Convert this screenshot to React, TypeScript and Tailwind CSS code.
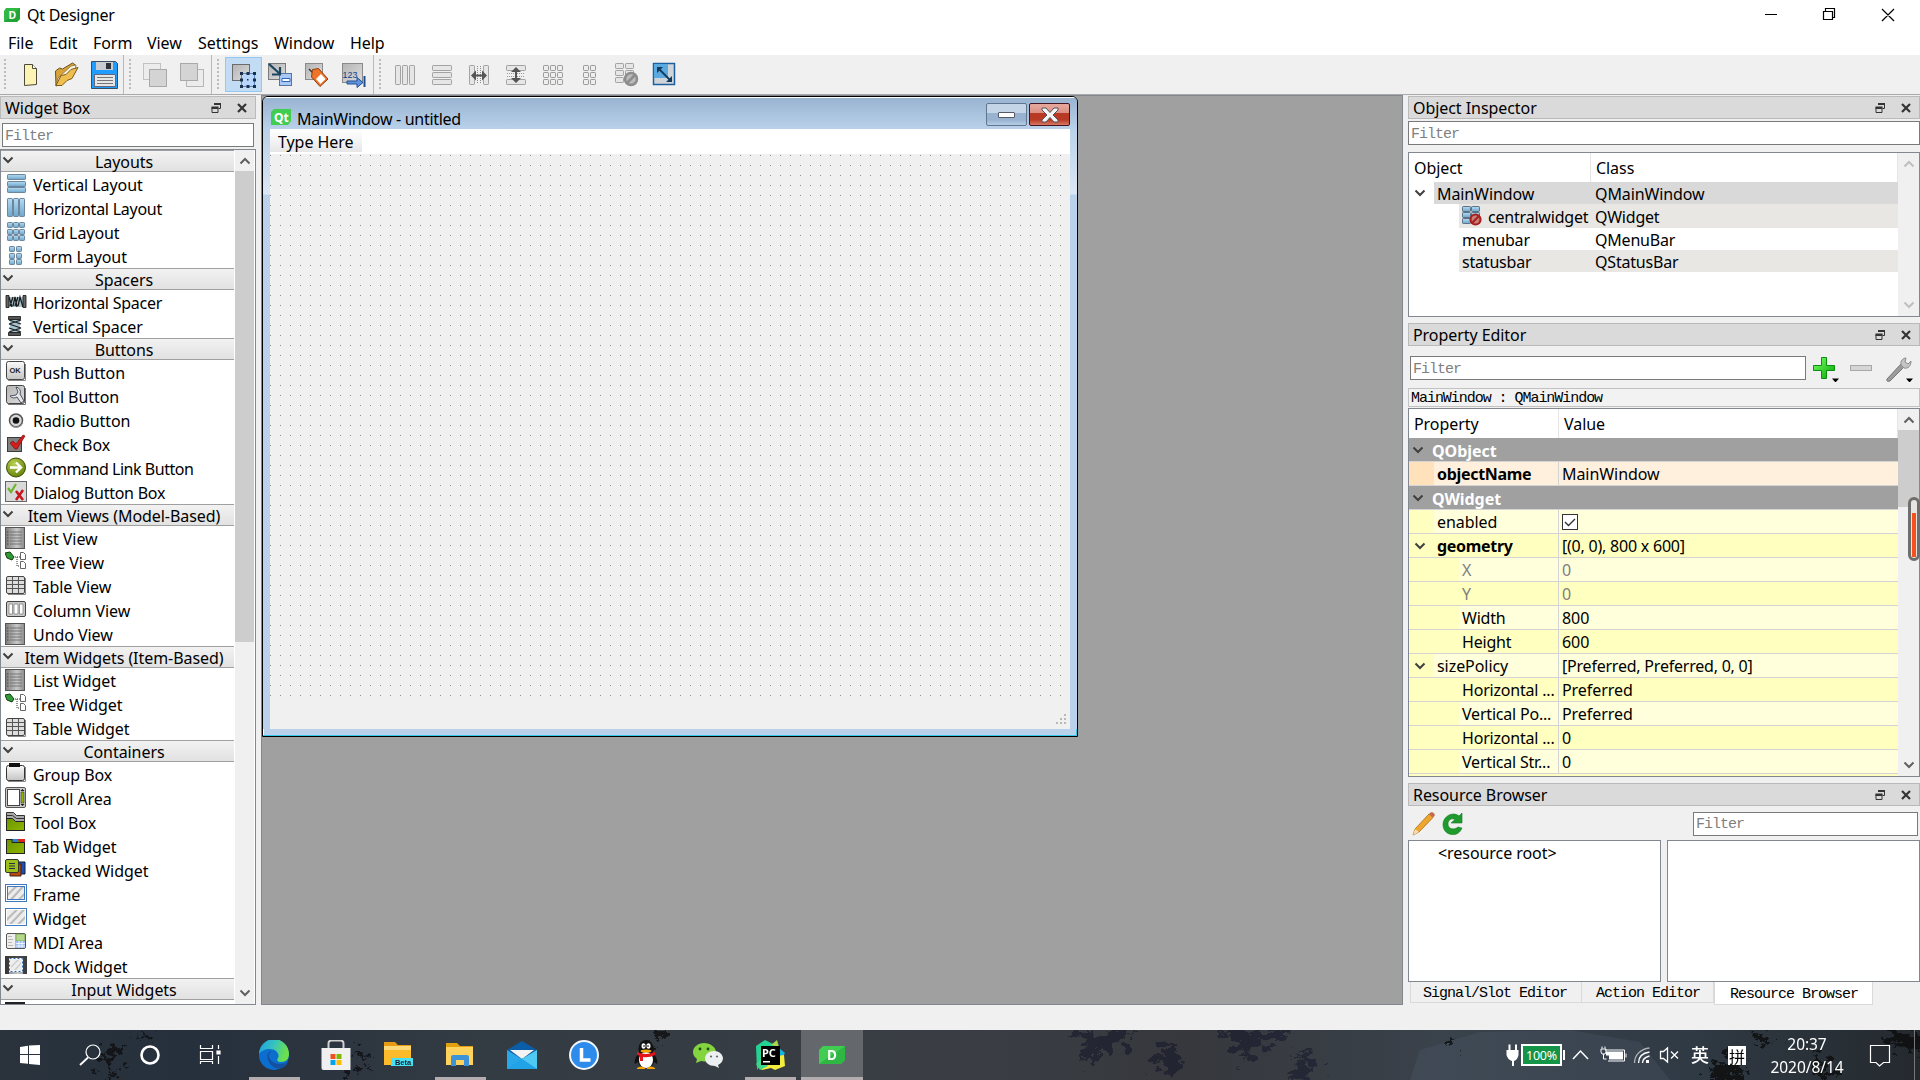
import type { ReactNode } from "react";
import { clsx } from "clsx";

type IconProps = { name: string };

const sections = [
  {
    title: "Layouts",
    items: [
      ["vbox", "Vertical Layout"],
      ["hbox", "Horizontal Layout"],
      ["grid", "Grid Layout"],
      ["form", "Form Layout"],
    ],
  },
  {
    title: "Spacers",
    items: [
      ["hspacer", "Horizontal Spacer"],
      ["vspacer", "Vertical Spacer"],
    ],
  },
  {
    title: "Buttons",
    items: [
      ["push", "Push Button"],
      ["tool", "Tool Button"],
      ["radio", "Radio Button"],
      ["check", "Check Box"],
      ["command", "Command Link Button"],
      ["dialog", "Dialog Button Box"],
    ],
  },
  {
    title: "Item Views (Model-Based)",
    items: [
      ["list", "List View"],
      ["tree", "Tree View"],
      ["table", "Table View"],
      ["column", "Column View"],
      ["list", "Undo View"],
    ],
  },
  {
    title: "Item Widgets (Item-Based)",
    items: [
      ["list", "List Widget"],
      ["tree", "Tree Widget"],
      ["table", "Table Widget"],
    ],
  },
  {
    title: "Containers",
    items: [
      ["group", "Group Box"],
      ["scroll", "Scroll Area"],
      ["toolbox", "Tool Box"],
      ["tab", "Tab Widget"],
      ["stacked", "Stacked Widget"],
      ["frame", "Frame"],
      ["widget", "Widget"],
      ["mdi", "MDI Area"],
      ["dock", "Dock Widget"],
    ],
  },
  { title: "Input Widgets", items: [] },
];

const properties = [
  { name: "QObject", kind: "group" },
  { name: "objectName", value: "MainWindow", kind: "peach", bold: true },
  { name: "QWidget", kind: "group" },
  { name: "enabled", value: "check", kind: "light" },
  { name: "geometry", value: "[(0, 0), 800 x 600]", kind: "dark", bold: true, open: true },
  { name: "X", value: "0", kind: "light", child: true, disabled: true },
  { name: "Y", value: "0", kind: "dark", child: true, disabled: true },
  { name: "Width", value: "800", kind: "light", child: true },
  { name: "Height", value: "600", kind: "dark", child: true },
  { name: "sizePolicy", value: "[Preferred, Preferred, 0, 0]", kind: "light", open: true },
  { name: "Horizontal ...", value: "Preferred", kind: "dark", child: true },
  { name: "Vertical Po...", value: "Preferred", kind: "light", child: true },
  { name: "Horizontal ...", value: "0", kind: "dark", child: true },
  { name: "Vertical Str...", value: "0", kind: "light", child: true },
];

function Defs() {
  return (
    <svg width="0" height="0" className="absolute">
      <defs>
        <linearGradient id="blue" x1="0" y1="0" x2="0" y2="1">
          <stop offset="0" stopColor="#b5dcf3" />
          <stop offset="1" stopColor="#6fa6cc" />
        </linearGradient>
        <linearGradient id="gray" x1="0" y1="0" x2="1" y2="1">
          <stop offset="0" stopColor="#b4b4b4" />
          <stop offset="1" stopColor="#dedede" />
        </linearGradient>
        <linearGradient id="light" x1="0" y1="0" x2="0" y2="1">
          <stop offset="0" stopColor="#fafafa" />
          <stop offset="1" stopColor="#c4c4c4" />
        </linearGradient>
        <linearGradient id="list" x1="0" y1="0" x2="1" y2="0">
          <stop offset="0" stopColor="#7c7c7c" />
          <stop offset="0.6" stopColor="#c8c8c8" />
          <stop offset="1" stopColor="#8a8a8a" />
        </linearGradient>
        <linearGradient id="olive" x1="0" y1="0" x2="1" y2="1">
          <stop offset="0" stopColor="#6c9400" />
          <stop offset="1" stopColor="#8db600" />
        </linearGradient>
        <radialGradient id="lime" cx="0.4" cy="0.3" r="0.8">
          <stop offset="0" stopColor="#b9d154" />
          <stop offset="1" stopColor="#5d7a00" />
        </radialGradient>
        <linearGradient id="plus" x1="0" y1="0" x2="1" y2="1">
          <stop offset="0" stopColor="#7dff6a" />
          <stop offset="1" stopColor="#00a800" />
        </linearGradient>
        <linearGradient id="edge" x1="0" y1="0" x2="1" y2="0.3">
          <stop offset="0" stopColor="#1b9de2" />
          <stop offset="0.5" stopColor="#35c1c4" />
          <stop offset="1" stopColor="#6be04c" />
        </linearGradient>
        <pattern id="dots" width="10" height="10" patternUnits="userSpaceOnUse">
          <rect x="0" y="1" width="1" height="1" fill="#8f8f8f" />
        </pattern>
        <filter id="rock" x="-5%" y="-20%" width="110%" height="140%">
          <feTurbulence type="fractalNoise" baseFrequency="0.09 0.12" numOctaves="4" seed="4" />
          <feDisplacementMap in="SourceGraphic" scale="42" xChannelSelector="R" yChannelSelector="G" />
        </filter>
      </defs>
    </svg>
  );
}

function Cells({ xs, ys, w, h, fill, stroke }: { xs: number[]; ys: number[]; w: number; h: number; fill: string; stroke: string }) {
  return (
    <>
      {ys.map((y) =>
        xs.map((x) => (
          <rect key={`${x}-${y}`} x={x + 0.5} y={y + 0.5} width={w - 1} height={h - 1} rx="0.7" fill={fill} stroke={stroke} />
        ))
      )}
    </>
  );
}

function WidgetIcon({ name }: IconProps) {
  const icons: Record<string, ReactNode> = {
    vbox: <Cells xs={[2]} ys={[1, 8, 14]} w={19} h={6} fill="url(#blue)" stroke="#6d869c" />,
    hbox: <Cells xs={[2, 8, 14]} ys={[1]} w={6} h={19} fill="url(#blue)" stroke="#6d869c" />,
    grid: <Cells xs={[2, 8, 14]} ys={[1, 8, 14]} w={6} h={6} fill="url(#blue)" stroke="#6d869c" />,
    form: <Cells xs={[4, 11]} ys={[1, 8, 14]} w={6} h={6} fill="url(#blue)" stroke="#6d869c" />,
    hspacer: (
      <>
        <path d="M4 6h14v10H4z" fill="#a5c3d0" />
        <path d="M4 6l3 10M8 15l2-9 2 10M13 15l2-9 3 10M5 15l3-9M10 15l3-9" stroke="#1c1c1c" strokeWidth="1.3" fill="none" />
        <path d="M1 4.500h3v12H1zM18 4.500h3v12h-3z" fill="#666" stroke="#111" strokeWidth="0.8" />
      </>
    ),
    vspacer: (
      <>
        <path d="M5 4h10v14H5z" fill="#a5c3d0" />
        <path d="M4 5l12 4M4 9l12 4M4 13l12 4M16 5L4 9M16 13L4 17" stroke="#1c1c1c" strokeWidth="1.300" fill="none" />
        <path d="M3.500 1.500h12v3h-12zM3.500 17.500h12v3h-12z" fill="#555" stroke="#111" strokeWidth="0.8" />
      </>
    ),
    push: (
      <>
        <rect x="1.5" y="0.5" width="18" height="18" rx="2" fill="url(#light)" stroke="#444" />
        <path d="M20.500 3v16.500H3" stroke="#888" fill="none" />
        <text x="4.500" y="12" fontSize="7.500" fontWeight="bold" fontFamily="Liberation Sans" fill="#222">OK</text>
      </>
    ),
    tool: (
      <>
        <rect x="1.500" y="0.500" width="18" height="18" rx="2" fill="url(#gray)" stroke="#444" />
        <path d="M20.500 3v16.500H3" stroke="#777" fill="none" />
        <path d="M11 2a5 5 0 0 1 4 7l4 7-3 2-4-6a5 5 0 0 1-7-1l6-1 2-3z" fill="#e4e8ee" stroke="#4c5158" />
      </>
    ),
    radio: (
      <>
        <circle cx="11" cy="11.500" r="6.500" fill="#d8d8d8" stroke="#555" strokeWidth="1.500" />
        <circle cx="11" cy="11.500" r="3.300" fill="#111" />
        <path d="M5 15a7.500 7.500 0 0 0 13-1" stroke="#999" fill="none" />
      </>
    ),
    check: (
      <>
        <rect x="2.500" y="4.500" width="14" height="14" fill="#808080" stroke="#3c3c3c" />
        <path d="M5 10l3-2 3 3 7-9 2 1-8 13h-2z" fill="#d81b1b" stroke="#7c0d0d" strokeWidth="0.700" />
      </>
    ),
    command: (
      <>
        <circle cx="11" cy="10.500" r="9.500" fill="url(#lime)" stroke="#3c4d00" />
        <path d="M5 10.500h10M11 5.500l5 5-5 5" fill="none" stroke="#fff" strokeWidth="2.400" />
      </>
    ),
    dialog: (
      <>
        <rect x="0.500" y="0.500" width="21" height="20" fill="#d9d9d9" stroke="#666" />
        <path d="M3 7l3 4 5-8" fill="none" stroke="#6cb52d" strokeWidth="2.200" />
        <path d="M11 10l7 9M18 9l-7 10" fill="none" stroke="#c4161c" strokeWidth="2.500" />
      </>
    ),
    list: (
      <>
        <rect x="0.500" y="0.500" width="19" height="21" fill="url(#list)" stroke="#555" />
        <path d="M5 5h12M5 8h12M5 11h12M5 14h12M5 17h12" stroke="#666" strokeWidth="0.800" />
        <path d="M2 5h1.500M2 8h1.500M2 11h1.500M2 14h1.500M2 17h1.500" stroke="#333" strokeWidth="0.800" />
      </>
    ),
    tree: (
      <>
        <path d="M0 2l5-1 4 5-2 3-5-2z" fill="#2f9a35" stroke="#123c14" />
        <path d="M10 6h5M12 6v9h3" stroke="#333" strokeDasharray="1 1" fill="none" />
        <path d="M15.500 1.500h3l2 2v5h-5zM15.500 10.500h3l2 2v5h-5z" fill="#fff" stroke="#666" />
      </>
    ),
    table: (
      <>
        <rect x="1.500" y="1.500" width="18" height="17" rx="1.500" fill="#dedede" stroke="#444" />
        <path d="M2 5.500h17M2 9.500h17M2 13.500h17M7.500 2v16M13.500 2v16" stroke="#555" />
        <path d="M20.500 3v16.500H3" stroke="#888" fill="none" />
      </>
    ),
    column: (
      <>
        <rect x="1.500" y="2.500" width="19" height="15" rx="1.500" fill="#c9c9c9" stroke="#444" />
        <path d="M4 5h3.500v10H4zM9 5h4v10H9zM14.500 5H18v10h-3.500z" fill="#fff" stroke="#777" strokeWidth="0.700" />
      </>
    ),
    group: (
      <>
        <rect x="1.500" y="2.500" width="18" height="15" rx="2" fill="url(#light)" stroke="#333" />
        <path d="M20.500 4v14.500H3" stroke="#888" fill="none" />
        <rect x="4" y="0" width="11" height="4" fill="#111" />
      </>
    ),
    scroll: (
      <>
        <rect x="0.500" y="0.500" width="20" height="20" rx="1.500" fill="#ccc" stroke="#555" />
        <rect x="2.500" y="2.500" width="12" height="16" fill="#fff" stroke="#444" />
        <path d="M16 5h3v11h-3z" fill="#8db600" stroke="#333" strokeWidth="0.600" />
        <path d="M15.500 4l2-2 2 2zM15.500 17l2 2 2-2z" fill="#111" />
      </>
    ),
    toolbox: (
      <>
        <path d="M1.500 1.500h7l3 3h8v15h-18z" fill="#aaa" stroke="#333" />
        <path d="M1.500 4.500h6l4 3h8" fill="none" stroke="#333" />
        <path d="M1.500 7.500h6l3 3h9v9h-18z" fill="url(#olive)" stroke="#222" />
      </>
    ),
    tab: (
      <>
        <rect x="1.500" y="4.500" width="18" height="14" fill="url(#olive)" stroke="#222" />
        <path d="M7 4h6v3H8z" fill="#2c7ed6" />
        <path d="M13 4h7v3h-6z" fill="#d22" />
        <path d="M7 4v3.500h13" fill="none" stroke="#222" />
      </>
    ),
    stacked: (
      <>
        <path d="M12 3h8v12h-8z" fill="#1c4fb5" stroke="#123" />
        <path d="M5 5h11v12H5z" fill="#b5480f" stroke="#421" />
        <rect x="0.500" y="0.500" width="13" height="13" rx="1.500" fill="#9dbf1b" stroke="#333" />
        <path d="M4 4.500h6M4 7h6M4 9.500h6" stroke="#234" />
      </>
    ),
    frame: (
      <>
        <rect x="0.500" y="1.500" width="21" height="17" fill="#fff" stroke="#3f79c0" />
        <rect x="2.500" y="3.500" width="17" height="13" fill="#ededed" stroke="#3f79c0" />
        <path d="M3 10l6-6h3l-9 9zM5 16L16 4h3L8 16zM13 16l6-6v3l-3 3z" fill="#bcbcbc" />
      </>
    ),
    widget: (
      <>
        <rect x="0.500" y="1.500" width="21" height="17" fill="#fff" stroke="#3f79c0" />
        <path d="M2 3h18v14H2z" fill="#ededed" />
        <path d="M2 11l8-8h3L2 14zM4 17L17 3h3L7 17zM12 17l8-8v3l-5 5z" fill="#bcbcbc" />
      </>
    ),
    mdi: (
      <>
        <rect x="1.500" y="2.500" width="19" height="15" rx="1.500" fill="#eee" stroke="#555" />
        <path d="M11 3h9v7h-9z" fill="#b3d789" stroke="#668844" strokeWidth="0.600" />
        <path d="M11 10h9v7h-9z" fill="#9bbcf0" />
        <path d="M11 12.500h9M11 15h9M14 10v7M17 10v7" stroke="#fff" strokeWidth="0.800" />
        <path d="M3 5.500h4M3 8.500h5M3 11.500h4M3 14.500h5M10.500 3v14" stroke="#aaa" strokeWidth="0.800" />
      </>
    ),
    dock: (
      <>
        <path d="M0 1h22v18H0z" fill="url(#list)" />
        <path d="M0 1h22v3H0zM18 1h4v18h-4zM0 1h4v18H0z" fill="#222" opacity="0.750" />
        <rect x="4.500" y="3.500" width="13" height="13" fill="#eee" stroke="#fff" />
        <rect x="4.500" y="3.500" width="13" height="13" fill="none" stroke="#2b6ab8" strokeDasharray="2 2" />
        <path d="M6 11l6-6h2l-8 8zM9 15l7-8v2l-5 6z" fill="#ccc" />
      </>
    ),
  };
  return (
    <svg width="22" height="22" viewBox="0 0 22 22" className="shrink-0">
      {icons[name]}
    </svg>
  );
}

function ToolIcon({ name }: IconProps) {
  const sq = "url(#gray)";
  const icons: Record<string, ReactNode> = {
    new: (
      <>
        <path d="M12.500 7.500h8l4 4v16l-12 1z" fill="#fdf3b4" stroke="#4d4a3a" />
        <path d="M20.500 7.500v4h4" fill="#fff" stroke="#4d4a3a" />
      </>
    ),
    open: (
      <>
        <path d="M6.500 14l4-3 3 1 10-6 3 2v6L12 27l-5 2z" fill="#d9a33c" stroke="#6e5118" />
        <path d="M9 21l13-12 5-1-1 8-12 9-7 3z" fill="#f5f0e4" stroke="#8a6d2c" strokeWidth="0.800" />
        <path d="M7 28.500l5-10 5-1 5-5 7-2-6 11-5 2-5 5z" fill="#eebf4e" stroke="#7e5c17" />
      </>
    ),
    save: (
      <>
        <path d="M5.500 4.500h24l2 2v25h-26z" fill="#1f9dff" stroke="#3a4f66" />
        <path d="M10 5h17v8H10z" fill="#c9ccd0" />
        <path d="M20 6h5v6h-5z" fill="#2f3338" />
        <path d="M8.500 17.500h21v12h-21z" fill="#e6e6e6" stroke="#667" />
        <path d="M11 20.500h16M11 23.500h16M11 26.500h16" stroke="#777" />
      </>
    ),
    lower: (
      <>
        <rect x="6.500" y="6.500" width="17" height="16" fill="#ececec" stroke="#c2c2c2" />
        <rect x="12.500" y="12.500" width="17" height="17" fill="#d4d4d4" stroke="#a9a9a9" />
      </>
    ),
    raise: (
      <>
        <rect x="12.500" y="12.500" width="17" height="17" fill="#ececec" stroke="#b5b5b5" />
        <rect x="6.500" y="6.500" width="17" height="17" fill="#d4d4d4" stroke="#a9a9a9" />
      </>
    ),
    widgets: (
      <>
        <rect x="7.500" y="7.500" width="17" height="16" fill={sq} stroke="#6b6b6b" />
        <rect x="16.500" y="16.500" width="13" height="13" fill="#b8d6fb" stroke="#5b86c4" />
        <path d="M15 15h3v3h-3zM21.500 15h3v3h-3zM28 15h3v3h-3zM15 21.500h3v3h-3zM28 21.500h3v3h-3zM15 28h3v3h-3zM21.500 28h3v3h-3zM28 28h3v3h-3zM22 22h1.500v1.500H22z" fill="#1b2e4a" />
      </>
    ),
    signals: (
      <>
        <rect x="6.500" y="6.500" width="17" height="16" fill={sq} stroke="#7a7a7a" />
        <rect x="17.500" y="16.500" width="12" height="12" fill="#a8c8f6" stroke="#56749c" />
        <path d="M20 21.500h8v3h-8z" fill="#fff" stroke="#2d67bb" />
        <path d="M7 7l11 10M18 10v7.500h-8" fill="none" stroke="#1c4660" strokeWidth="2.200" />
      </>
    ),
    buddies: (
      <>
        <rect x="6.500" y="6.500" width="17" height="16" fill={sq} stroke="#8a8a8a" />
        <path d="M10 12l4 4" stroke="#333" strokeWidth="1.500" />
        <path d="M13.500 12.500l6-1L29 22l-8 7.500L12.500 20z" fill="#ef7428" stroke="#8f3d0e" />
        <path d="M17 22l5-5 4.500 5-5 5z" fill="#fff" />
      </>
    ),
    taborder: (
      <>
        <rect x="6.500" y="6.500" width="20" height="19" fill={sq} stroke="#8a8a8a" />
        <text x="6.500" y="21" fontSize="9" fontFamily="Liberation Sans" fill="#123e8c">123</text>
        <path d="M11 24h10v-3.500l6 5-6 5V27H11z" fill="#5d94dd" stroke="#204f92" />
        <path d="M28.500 19v11" stroke="#204f92" strokeWidth="2" />
      </>
    ),
    hlayout: <Cells xs={[8, 15, 22]} ys={[8]} w={6} h={20} fill="#e6e6e6" stroke="#a3a3a3" />,
    vlayout: <Cells xs={[8]} ys={[8, 15, 22]} w={20} h={6} fill="#e6e6e6" stroke="#a3a3a3" />,
    hsplit: (
      <>
        <Cells xs={[8, 22]} ys={[8]} w={6} h={20} fill="#e6e6e6" stroke="#a3a3a3" />
        <path d="M16.500 9v18M19.500 9v18" stroke="#888" strokeDasharray="1 1" />
        <path d="M10 18.500l5-5v4h6v-4l5 5-5 5v-4h-6v4z" fill="#555" />
      </>
    ),
    vsplit: (
      <>
        <Cells xs={[8]} ys={[8, 22]} w={20} h={6} fill="#e6e6e6" stroke="#a3a3a3" />
        <path d="M9 16.500h18M9 19.500h18" stroke="#999" strokeDasharray="1 1" />
        <path d="M18 10l5 5h-4v6h4l-5 5-5-5h4v-6h-4z" fill="#555" />
      </>
    ),
    gridlayout: <Cells xs={[8, 15, 22]} ys={[8, 15, 22]} w={6} h={6} fill="#eee" stroke="#9a9a9a" />,
    formlayout: <Cells xs={[11, 18]} ys={[8, 15, 22]} w={6} h={6} fill="#eee" stroke="#9a9a9a" />,
    breaklayout: (
      <>
        <Cells xs={[6, 16]} ys={[6, 13, 20]} w={9} h={6} fill="#e6e6e6" stroke="#a3a3a3" />
        <circle cx="22" cy="22" r="6" fill="#bbb" stroke="#8d8d8d" strokeWidth="2.500" />
        <path d="M18 26l8-8" stroke="#8d8d8d" strokeWidth="2.500" />
      </>
    ),
    adjust: (
      <>
        <rect x="7.500" y="6.500" width="21" height="21" fill="#cfd4d8" stroke="#1d5f9e" strokeWidth="1.500" />
        <path d="M8 7h14v14H8z" fill="#5aa9e0" />
        <path d="M12 11l13 13" stroke="#123a5c" strokeWidth="1.800" />
        <path d="M11 10h6l-6 6zM26 25h-6l6-6z" fill="#123a5c" />
      </>
    ),
  };
  return (
    <svg width="37" height="35" viewBox="0 0 37 35">
      {icons[name]}
    </svg>
  );
}

function Chevron({ up, className = "text-[#404040]" }: { up?: boolean; className?: string }) {
  return (
    <svg width="12" height="8" viewBox="0 0 12 8" className={clsx("shrink-0", className)}>
      <path d={up ? "M1.500 6.500L6 2l4.500 4.500" : "M1.500 1.500L6 6l4.500-4.500"} fill="none" stroke="currentColor" strokeWidth="2" />
    </svg>
  );
}

function DockTitle({ title }: { title: string }) {
  return (
    <div className="flex h-[23px] shrink-0 items-center border border-[#bababa] bg-[#dadada] pl-1 pr-[8px]">
      <span className="flex-1 pt-px">{title}</span>
      <svg width="11" height="12" viewBox="0 0 11 12" className="mr-[15px]">
        <path d="M3.500 3V1.500h6v5H8" fill="none" stroke="#333" />
        <path d="M3 1h7v2H3z" fill="#333" />
        <path d="M1 5.500h6v5H1z" fill="none" stroke="#333" />
        <path d="M0.500 4.500h7v2.500h-7z" fill="#333" />
      </svg>
      <svg width="10" height="10" viewBox="0 0 10 10">
        <path d="M1 1l8 8M9 1L1 9" stroke="#333" strokeWidth="2.200" />
      </svg>
    </div>
  );
}

function Filter({ className }: { className: string }) {
  return (
    <div className={clsx("flex h-6 items-center border border-[#7a7a7a] bg-white pl-[2px] pt-[3px] font-['Liberation_Mono',monospace] text-[15px] tracking-[-1px] text-[#7f7f7f]", className)}>
      Filter
    </div>
  );
}

function ToolGroup({ icons, active, last }: { icons: string[]; active?: string; last?: boolean }) {
  return (
    <div className={clsx("mr-px flex h-[39px] items-center", !last && "border-r border-[#b9b9b9]")}>
      <div className="ml-1 mr-[6px] h-[31px] w-[2px] bg-[repeating-linear-gradient(to_bottom,#bcbcbc_0_2px,transparent_2px_4px)]" />
      {icons.map((name) => (
        <div key={name} className={clsx("h-[35px] w-[37px]", name === active && "bg-[#c2dcf3] outline outline-1 -outline-offset-1 outline-[#90c8f6]")}>
          <ToolIcon name={name} />
        </div>
      ))}
    </div>
  );
}

function WidgetBox() {
  return (
    <div className="flex h-[910px] w-[256px] flex-col pt-px">
      <DockTitle title="Widget Box" />
      <Filter className="ml-[2px] mt-1 w-[252px]" />
      <div className="mt-[2px] flex h-[856px] border border-[#828790] bg-white">
        <div className="h-full w-[233px] overflow-hidden">
          {sections.map((section) => (
            <div key={section.title}>
              <div className="flex h-[22px] items-center border-y border-[#a0a0a0] bg-linear-to-b from-[#f2f2f2] to-[#e2e2e2] pl-px">
                <Chevron className="mb-[3px] text-[#404040]" />
                <span className="flex-1 pt-[2px] text-center">{section.title}</span>
              </div>
              {section.items.map(([icon, label]) => (
                <div key={label} className="flex h-6 items-center gap-[6px] pl-1">
                  <WidgetIcon name={icon} />
                  <span className={clsx("pt-[2px]", label.length > 17 ? "tracking-[-0.45px]" : label.length > 15 && "tracking-[-0.25px]")}>{label}</span>
                </div>
              ))}
            </div>
          ))}
          <div className="ml-1 mt-[2px] h-4 w-5 bg-[#222]" />
        </div>
        <div className="ml-px flex w-[19px] flex-col items-center bg-[#f0f0f0]">
          <div className="flex h-[21px] items-center">
            <Chevron up className="text-[#606060]" />
          </div>
          <div className="h-[471px] w-full bg-[#cdcdcd]" />
          <div className="flex-1" />
          <div className="flex h-[22px] items-center">
            <Chevron className="text-[#606060]" />
          </div>
        </div>
      </div>
    </div>
  );
}

function FormWindow() {
  return (
    <div className="flex h-[641px] w-[816px] flex-col overflow-hidden rounded-t-[6px] border border-black bg-[#b9d1ea] shadow-[inset_-1px_-1px_0_#35c9ee,inset_1px_1px_0_#fff]">
      <div className="flex h-8 shrink-0 border-t border-white bg-linear-to-b from-[#99b4d1] to-[#b9d1ea] pl-[8px]">
        <svg width="20" height="16" viewBox="0 0 20 16" className="mt-[11px]">
          <path d="M3 0h17v12l-3 4H0V3z" fill="#41cd52" />
          <text x="3" y="12.500" fontSize="12" fontWeight="bold" fontFamily="Noto Sans" fill="#fff">Qt</text>
        </svg>
        <span className="ml-[6px] mt-[11px] flex-1 tracking-[-0.3px]">MainWindow - untitled</span>
        <div className="mt-[5px] flex h-[23px] w-[41px] items-center justify-center rounded-[2px] border border-[#5f7590] bg-[linear-gradient(#c4d5e8_0_45%,#98b3d0_45%_75%,#b5cce4)]">
          <div className="h-[6px] w-[17px] rounded-[1px] border border-[#555a66] bg-white" />
        </div>
        <div className="ml-[2px] mr-[7px] mt-[5px] flex h-[23px] w-[41px] items-center justify-center rounded-[2px] border border-[#431422] bg-[linear-gradient(#e5a598_0_10%,#dc8f83_42%,#b83a24_43%_75%,#d97a63)]">
          <svg width="18" height="16" viewBox="0 0 18 16">
            <path d="M1 1h4l4 4.500L13 1h4v2l-5 5 5 5v2h-4l-4-4.500L5 15H1v-2l5-5-5-5z" fill="#f5f5f5" stroke="#54525e" />
          </svg>
        </div>
      </div>
      <div className="flex h-[600px] bg-[linear-gradient(#b9d1ea,#dbe7f4_65px,#b9d1ea_66px)] px-[7px]">
        <div className="flex h-[600px] w-[800px] flex-col bg-[#f0f0f0]">
          <div className="flex h-[25px] bg-white">
            <div className="flex h-[23px] w-[92px] items-center bg-linear-to-b from-white via-[#f4f4f4] to-[#e6e6e6] pl-[8px] pt-[2px]">Type Here</div>
          </div>
          <svg width="800" height="550">
            <rect width="800" height="550" fill="url(#dots)" />
          </svg>
          <div className="flex flex-1 items-end justify-end p-[3px]">
            <svg width="12" height="12" viewBox="0 0 12 12" fill="#b8b8b8">
              <path d="M9 0h2v2H9zM5 4h2v2H5zM9 4h2v2H9zM1 8h2v2H1zM5 8h2v2H5zM9 8h2v2H9z" />
            </svg>
          </div>
        </div>
      </div>
    </div>
  );
}

function ObjectInspector() {
  const rows = [
    ["centralwidget", "QWidget"],
    ["menubar", "QMenuBar"],
    ["statusbar", "QStatusBar"],
  ];
  return (
    <div className="flex h-[227px] flex-col pt-px">
      <DockTitle title="Object Inspector" />
      <Filter className="mt-[2px]" />
      <div className="mt-[7px] flex h-[165px] border border-[#828790] bg-white">
        <div className="w-[489px]">
          <div className="flex h-[29px] items-center border-r border-[#e5e5e5]">
            <div className="flex h-full w-[182px] items-center border-r border-[#e5e5e5] pl-[5px] pt-px">Object</div>
            <div className="pl-[5px] pt-px">Class</div>
          </div>
          <div className="flex h-[22px] items-center pl-[5px]">
            <Chevron />
            <div className="ml-[8px] flex h-full flex-1 items-center bg-[#d9d9d9] pl-[3px] pt-px tracking-[-0.1px]">
              <span className="w-[158px]">MainWindow</span>QMainWindow
            </div>
          </div>
          {rows.map(([name, cls], i) => (
            <div key={name} className={clsx("ml-[50px] flex items-center pl-[3px] tracking-[-0.2px]", i === 0 ? "h-6" : "h-[22px]", i !== 1 && "bg-[#e9e7e3]")}>
              <div className="flex w-[133px] items-center">
                {i === 0 && (
                  <svg width="20" height="20" viewBox="0 0 20 20" className="mr-[6px] shrink-0">
                    <Cells xs={[0, 9]} ys={[0, 6, 12]} w={9} h={6} fill="url(#blue)" stroke="#5b7389" />
                    <circle cx="13.500" cy="13.500" r="5" fill="#c98078" stroke="#a81f1f" strokeWidth="2.200" />
                    <path d="M10 17l7-7" stroke="#a81f1f" strokeWidth="2.200" />
                  </svg>
                )}
                <span className="pt-px">{name}</span>
              </div>
              <span className="pt-px">{cls}</span>
            </div>
          ))}
        </div>
        <div className="flex flex-1 flex-col items-center justify-between bg-[#f0f0f0] py-[7px]">
          <Chevron up className="text-[#bfbfbf]" />
          <Chevron className="text-[#bfbfbf]" />
        </div>
      </div>
    </div>
  );
}

const tones: Record<string, string> = {
  group: "bg-[#a0a0a0] text-white font-bold",
  peach: "bg-[#fff0de]",
  light: "bg-[#ffffdc]",
  dark: "bg-[#ffffbf]",
};

function PropertyEditor() {
  return (
    <div className="flex h-[460px] flex-col">
      <DockTitle title="Property Editor" />
      <div className="flex h-[42px] items-center pl-[2px] pt-[2px]">
        <Filter className="w-[396px]" />
        <svg width="114" height="28" viewBox="-2 0 114 28">
          <path d="M13.500 3.500h5v8h8v5h-8v8h-5v-8h-8v-5h8z" fill="url(#plus)" stroke="#0a8f12" />
          <path d="M24 24.500h7l-3.500 4zM98 24.500h7l-3.500 4z" fill="#000" />
          <rect x="42.500" y="11.500" width="21" height="5" fill="#d5d5d5" stroke="#a8a8a8" />
          <path d="M79 25l14-15 3 3-14 14c-2 1-4 0-3-2z" fill="#9b9b9b" stroke="#777" />
          <path d="M93 11c-1-4 2-7 5-7l-1 4 3 2 3-3c0 5-3 8-7 7z" fill="#c4c4c4" stroke="#8b8b8b" />
        </svg>
      </div>
      <div className="flex h-[19px] items-center border border-[#c2c2c2] bg-[#f2f2f2] pl-[2px] pt-[3px] font-['Liberation_Mono',monospace] text-[15px] tracking-[-1.04px]">
        MainWindow : QMainWindow
      </div>
      <div className="mt-px flex h-[369px] border border-[#828790] bg-white">
        <div className="h-full w-[489px] overflow-hidden">
          <div className="flex h-[29px] items-center border-r border-[#e5e5e5]">
            <div className="flex h-full w-[150px] items-center border-r border-[#e5e5e5] pl-[5px] pt-px">Property</div>
            <div className="pl-[5px] pt-px">Value</div>
          </div>
          {properties.map((prop, i) =>
            prop.kind === "group" ? (
              <div key={i} className={clsx("flex h-6 items-center border-b border-[#d4d4d4] pl-[3px]", tones.group)}>
                <Chevron />
                <span className="pl-[8px] pt-[2px]">{prop.name}</span>
              </div>
            ) : (
              <div key={i} className={clsx("flex h-6 border-b border-[#d4d4d4]", tones[prop.kind], prop.disabled && "text-[#808080]")}>
                <div className={clsx("flex h-full items-center", prop.child ? "w-[50px]" : "w-[25px]", prop.kind === "peach" ? "bg-[#ffe2bb]" : "bg-[#ffffbf]")}>
                  {prop.open && (
                    <div className="pl-[5px]">
                      <Chevron />
                    </div>
                  )}
                </div>
                <div className={clsx("flex items-center border-r border-[#d4d4d4] pl-[3px] pt-px", prop.child ? "w-[100px] tracking-[-0.2px]" : "w-[125px]", prop.bold && "font-bold tracking-[-0.3px]")}>{prop.name}</div>
                <div className="flex items-center pl-[3px] pt-px">
                  {prop.value === "check" ? (
                    <svg width="16" height="16" viewBox="0 0 16 16">
                      <rect x="0.500" y="0.500" width="15" height="15" fill="#fff" stroke="#333" />
                      <path d="M3 8l3.500 3.500L13 5" fill="none" stroke="#333" strokeWidth="1.400" />
                    </svg>
                  ) : (
                    <span className={prop.value && prop.value.length > 12 ? "tracking-[-0.22px]" : ""}>{prop.value}</span>
                  )}
                </div>
              </div>
            )
          )}
          <div className="h-6 bg-[#ffffbf]" />
        </div>
        <div className="flex flex-1 flex-col items-center bg-[#f0f0f0]">
          <div className="flex h-[21px] items-center">
            <Chevron up className="text-[#606060]" />
          </div>
          <div className="relative h-[77px] w-full bg-[#cdcdcd]">
            {/* floating volume gauge */}
            <div className="absolute left-[10px] top-[67px] h-[64px] w-[12px] rounded-full border-[3px] border-[#6e6e6e] bg-[#e8e4e2] px-[1px] pb-px pt-[13px]">
              <div className="h-full w-full bg-[#f4511e]" />
            </div>
          </div>
          <div className="flex-1" />
          <div className="flex h-[22px] items-center">
            <Chevron className="text-[#606060]" />
          </div>
        </div>
      </div>
    </div>
  );
}

function ResourceBrowser() {
  return (
    <div className="flex flex-col">
      <DockTitle title="Resource Browser" />
      <div className="flex h-[34px] items-center justify-between pr-[2px] pt-px">
        <svg width="60" height="28" viewBox="0 0 60 28">
          <path d="M5 25l2-6L21 4l4 3.500L11 22z" fill="#f0a52c" stroke="#a5701a" strokeWidth="0.800" />
          <path d="M21 4l1.500-1.500c2-1 5 1 4 3.500L25 7.500z" fill="#c8694f" />
          <path d="M5 25l2-6 4 3z" fill="#f4dcb0" />
          <path d="M54 3v10H43l4-3.500c-4-2-7 1-7 4.500 0 5 6 6.500 10 3l4 1c-2 5-6 7-10 6.500-6-.5-9-5-9-10C35 6 45 1 51 6z" fill="#1f9a2c" stroke="#147a1e" strokeWidth="0.600" />
        </svg>
        <Filter className="w-[225px]" />
      </div>
      <div className="flex gap-[6px]">
        <div className="h-[142px] w-[253px] border border-[#828790] bg-white pl-[29px] pt-[2px]">&lt;resource root&gt;</div>
        <div className="h-[142px] flex-1 border border-[#828790] bg-white" />
      </div>
      <div className="flex pl-[2px] font-['Liberation_Mono',monospace] text-[15px] tracking-[-1px]">
        <div className="flex h-[21px] w-[172px] items-center border border-t-0 border-[#d9d9d9] pl-3 pt-[3px]">Signal/Slot Editor</div>
        <div className="flex h-[21px] w-[132px] items-center border border-l-0 border-t-0 border-[#d9d9d9] pl-[14px] pt-[3px]">Action Editor</div>
        <div className="flex h-[23px] w-[159px] items-center border border-t-0 border-[#d9d9d9] bg-white pl-[15px] pt-[3px]">Resource Browser</div>
      </div>
    </div>
  );
}

function TaskIcon({ name }: IconProps) {
  const icons: Record<string, ReactNode> = {
    edge: (
      <>
        <circle cx="15" cy="15" r="15" fill="#0c6fd0" />
        <path d="M0 14A15 15 0 0 1 30 14c0 5-3 8-8 8-3 0-5-2-3-4 2-4-2-9-8-9-5 0-9 2-11 5z" fill="url(#edge)" />
        <path d="M10 16c0-3 2-5 5-5-7-1-7 5-6 9 2 6 8 10 14 8 3-1 5-3 6-6-7 4-18 2-19-6z" fill="#1451a0" />
      </>
    ),
    store: (
      <>
        <path d="M7.500 9V3.500q0-3 3-3h9q3 0 3 3V9" fill="none" stroke="#cfcfcf" strokeWidth="2" />
        <path d="M0.500 8h29v22h-27q-2 0-2-2z" fill="#f0f0f0" />
        <path d="M9.500 14h5v5h-5z" fill="#f25022" />
        <path d="M15.500 14h5v5h-5z" fill="#7fba00" />
        <path d="M9.500 20h5v5h-5z" fill="#00a4ef" />
        <path d="M15.500 20h5v5h-5z" fill="#ffb900" />
      </>
    ),
    beta: (
      <>
        <path d="M1 2h11l3 3h13v20H1z" fill="#e79a12" />
        <path d="M1 9h27v16H1z" fill="#fdbb2b" />
        <path d="M1 6h27v4H1z" fill="#fdd878" />
        <path d="M8 18h22v8H8z" fill="#4be0f2" />
        <text x="12" y="24.500" fontSize="7.500" fontWeight="bold" fontFamily="Liberation Sans" fill="#123">Beta</text>
      </>
    ),
    folder: (
      <>
        <path d="M1 3h11l3 3h13v4H1z" fill="#e0a010" />
        <path d="M1 7h27v18H1z" fill="#ffd25e" />
        <path d="M6 26V17q0-2 2-2h14q2 0 2 2v9h-5v-6h-8v6z" fill="#3c93d8" />
      </>
    ),
    mail: (
      <>
        <path d="M0 10L15 1l15 9-15 9z" fill="#0b5da8" />
        <path d="M3 10h24l-12 9z" fill="#f3f3f3" />
        <path d="M0 10l15 9 15-9v19H0z" fill="#28a8ea" />
        <path d="M15 19l15-9v19z" fill="#50c8f4" />
        <path d="M15 19l15 10H0z" fill="#1b9be4" opacity="0.500" />
      </>
    ),
    clock: (
      <>
        <circle cx="15" cy="15" r="14" fill="#2d8ceb" stroke="#f2f6fb" strokeWidth="2" />
        <path d="M12.500 8v12h9" fill="none" stroke="#fff" strokeWidth="3.500" />
      </>
    ),
    qq: (
      <>
        <path d="M8 13C4 17 3 22 4 24l4-3zM22 13c4 4 5 9 4 11l-4-3z" fill="#111" />
        <ellipse cx="15" cy="19" rx="9" ry="9" fill="#111" />
        <ellipse cx="15" cy="8.500" rx="7.500" ry="8.500" fill="#111" />
        <ellipse cx="15" cy="20" rx="7" ry="8" fill="#fff" />
        <ellipse cx="12.500" cy="6" rx="2" ry="2.800" fill="#fff" />
        <ellipse cx="17.500" cy="6" rx="2" ry="2.800" fill="#fff" />
        <path d="M12.500 5h1v2h-1zM16.500 5h1v2h-1z" fill="#111" />
        <ellipse cx="15" cy="11" rx="5.500" ry="1.600" fill="#f5a400" />
        <path d="M6 12q9 4 18 0v3q-6 3-12 2v4H9v-5l-3-1z" fill="#e3151a" />
        <path d="M6 28q4-3 8 0v1H6zM16 28q4-3 8 0v1h-8z" fill="#f5a400" />
      </>
    ),
    wechat: (
      <>
        <path d="M11 3C5 3 0 7 0 12c0 3 1.500 5 4 7l-1 4 5-2c8 2 15-3 15-9 0-5-6-9-12-9z" fill="#83d43f" />
        <circle cx="7" cy="9" r="1.400" fill="#234b10" />
        <circle cx="15" cy="9" r="1.400" fill="#234b10" />
        <path d="M21 11c-5 0-9 3.500-9 7.500s4 7.500 10 7.500l4 2-1-3c3-1.500 5-4 5-6.500 0-4-4-7.500-9-7.500z" fill="#eceff1" />
        <circle cx="18" cy="16.500" r="1.100" fill="#666" />
        <circle cx="24" cy="16.500" r="1.100" fill="#666" />
      </>
    ),
    pycharm: (
      <>
        <path d="M1 6l9-6 10 5-10 14-8 11z" fill="#24d292" />
        <path d="M16 5l6-5 2 7z" fill="#a5d94e" />
        <path d="M24 8l6 5-4 7z" fill="#12b5e0" />
        <path d="M2 25l20-9 7-1 1 11-10 4-4-2-9 2z" fill="#f3ec3c" />
        <path d="M1 24l6-6 6 8-8 4z" fill="#3fd58a" />
        <path d="M6 6h19v19H6z" fill="#000" />
        <path d="M8 21h7v1.500H8z" fill="#fff" />
        <text x="7" y="16.500" fontSize="11" fontWeight="bold" fontFamily="Noto Sans" fill="#fff">PC</text>
      </>
    ),
    qt: (
      <>
        <path d="M6 6h22v14l-4 4H2V10z" fill="#41cd52" />
        <path d="M28 6v14l-4 4H2z" fill="#21a83a" opacity="0.600" />
        <text x="10" y="20" fontSize="13.500" fontWeight="bold" fontFamily="Noto Sans" fill="#fff">D</text>
      </>
    ),
  };
  return (
    <svg width="30" height="30" viewBox="0 0 30 30">
      {icons[name]}
    </svg>
  );
}

const apps = [
  { name: "edge", running: true },
  { name: "store" },
  { name: "beta" },
  { name: "folder", running: true },
  { name: "mail" },
  { name: "clock" },
  { name: "qq" },
  { name: "wechat" },
  { name: "pycharm", running: true },
  { name: "qt", active: true },
];

function Taskbar() {
  return (
    <div className="relative flex h-[50px] overflow-hidden bg-[linear-gradient(to_right,#2a333c,#26303c_10%,#333b43_25%,#3a3e44_50%,#36383d_62%,#3a424b_75%,#303a44_88%,#24292e)] text-white">
      <svg width="1920" height="50" viewBox="0 0 1920 50" className="absolute left-0 top-0" fill="#0c0f12">
        <path d="M1420 20l60-18 90-2 70 12 30 38h-260z" fill="#5a6a7c" opacity="0.200" />
        <g filter="url(#rock)">
          <path d="M100 22l16-6 10 3-8 10-10 4 6 6-14 4 2-12zM134 4l22-4-8 6zM104 42l14 4-12 4zM350 16l12 8 6 6-8-1zM345 40l14 2-8 8h-10zM655 0h14l-6 12-8 6z" opacity="0.800" />
          <path d="M1070 0h70l-20 14-10 16-12-6-16 10 4-20zM1150 24l20-10 14 12-8 18-20-4zM1215 0h80l-14 12-22 4-16 14-10-12zM1300 20l20 14-8 14-24 2z" opacity="0.350" />
          <path d="M1708 50l4-14 14-6 4-12 10 2-4 14 12 16zM1752 8l12-6 10 8-12 6zM1812 26l14 4 10 14-18 6zM1884 4l14-4h22v24l-16-6-12-4zM1448 8l10 2-8 6z" opacity="0.850" />
        </g>
      </svg>
      <div className="relative flex w-full">
        <svg width="243" height="50" viewBox="0 0 243 50" fill="none" stroke="#fff" strokeWidth="1.200">
          <path d="M20 17l8-1.200V24h-8zM29 15.600L40 15v9H29zM20 25h8v8.800L20 33zM29 25h11v10l-11-1z" fill="#fff" stroke="none" />
          <circle cx="93" cy="22" r="7" />
          <path d="M88 27.500L80 35" strokeWidth="1.800" />
          <circle cx="150" cy="25" r="8.500" strokeWidth="2.600" />
          <path d="M200.500 15v3.500h12V15M200.500 21.500h12v8h-12zM200.500 34v-2.500h12V34M218.500 15v4M218.500 26v8" />
          <path d="M217 21h3v3h-3z" fill="#fff" />
        </svg>
        {apps.map((app) => (
          <div key={app.name} className={clsx("relative flex w-[62px] justify-center pt-[10px]", app.active && "bg-[#64676c]")}>
            <TaskIcon name={app.name} />
            {app.running && <div className="absolute bottom-0 left-[6px] h-[3px] w-[51px] bg-[#b3adb0]" />}
            {app.active && <div className="absolute bottom-0 left-0 h-[3px] w-[62px] bg-[#b3adb0]" />}
          </div>
        ))}
        <div className="flex-1" />
        <svg width="180" height="50" viewBox="0 0 180 50" fill="none" stroke="#fff">
          <path d="M0.500 20h12v5q-1 5-4.500 6v5H6v-5q-4-1-5.500-6zM2.500 14.500h2V20h-2zM9 14.500h2V20H9z" fill="#fff" stroke="none" />
          <rect x="16" y="15" width="39" height="20" fill="#149447" strokeWidth="2" />
          <path d="M57 20h2v10h-2z" fill="#fff" stroke="none" />
          <text x="20" y="29.500" fontSize="12.500" fontFamily="Noto Sans" fill="#fff" stroke="none" textLength="31">100%</text>
          <path d="M67 29l7.500-8 7.500 8" strokeWidth="1.500" />
          <path d="M100 21.500h17v8h-14v-4h-3z" fill="#fff" stroke="none" />
          <path d="M102 31h16.500V20H99M120 23.500v4M95 19h5v3l-1 2h-3l-1-2zM96 16.500v2M99 16.500v2M97.500 24v5h3" />
          <g strokeWidth="1.300">
            <path d="M128.500 33c0-8 6-14 15-15" opacity="0.600" />
            <path d="M132.500 33c0-6 4-10 11-11M136.500 33c0-4 3-6 7-7" />
          </g>
          <path d="M140 30h3v3h-3z" fill="#fff" stroke="none" />
          <path d="M154.500 21.500h3l4-3.500v14l-4-3.500h-3zM165 21.500l7 7M172 21.500l-7 7" strokeWidth="1.300" />
        </svg>
        <span className="ml-[5px] mt-[11px] w-5 font-['Noto_Sans_CJK_SC',sans-serif] text-[18px] leading-[26px] font-medium">英</span>
        <span className="ml-[17px] mt-4 flex h-[19px] w-[18px] items-center justify-center bg-white font-['Noto_Sans_CJK_SC',sans-serif] text-[16px] leading-none text-black">拼</span>
        <div className="ml-[11px] w-[100px] pt-[3px] text-center text-[15.5px] leading-[23px]">
          <div>20:37</div>
          <div>2020/8/14</div>
        </div>
        <svg width="60" height="50" viewBox="0 0 60 50" fill="none" stroke="#fff" className="ml-[3px]">
          <path d="M10.500 15.500h19v17h-6l-4 3.500-3.500-3.500h-5.500z" strokeWidth="1.200" />
          <path d="M54.500 0v50" stroke="#777" />
        </svg>
      </div>
    </div>
  );
}

export default function App() {
  return (
    <div className="flex h-[1080px] w-[1920px] flex-col overflow-hidden bg-[#f0f0f0] font-['Noto_Sans','Noto_Sans_CJK_SC',sans-serif] text-[16px] leading-[20px] tracking-[-0.06px] whitespace-nowrap text-black">
      <Defs />
      <div className="flex h-[29px] items-center bg-white">
        <svg width="16" height="14" viewBox="0 0 16 14" className="ml-1">
          <path d="M2 0h14v11l-3 3H0V3z" fill="#2fb944" />
          <path d="M16 0v11l-3 3H0z" fill="#12902b" opacity="0.500" />
          <text x="4.500" y="11" fontSize="10.500" fontWeight="bold" fontFamily="Noto Sans" fill="#fff">D</text>
        </svg>
        <span className="ml-[7px] flex-1 tracking-[-0.25px]">Qt Designer</span>
        <svg width="160" height="28" viewBox="0 0 160 28" fill="none" stroke="#000" strokeWidth="1.200">
          <path d="M5 13.500h12M63.500 10.500h9v8h-9zM65.500 10V7.500h9v9H73M122 8l12 12M134 8l-12 12" />
        </svg>
      </div>
      <div className="flex h-[26px] items-center bg-white pl-[8px] pt-px">
        <span className="w-[41px]">File</span>
        <span className="w-[44px]">Edit</span>
        <span className="w-[54px]">Form</span>
        <span className="w-[51px]">View</span>
        <span className="w-[76px]">Settings</span>
        <span className="w-[76px]">Window</span>
        <span>Help</span>
      </div>
      <div className="flex h-[40px] border-b border-[#a9a9a9]">
        <ToolGroup icons={["new", "open", "save"]} />
        <ToolGroup icons={["lower", "raise"]} />
        <ToolGroup icons={["widgets", "signals", "buddies", "taborder"]} active="widgets" />
        <ToolGroup icons={["hlayout", "vlayout", "hsplit", "vsplit", "gridlayout", "formlayout", "breaklayout", "adjust"]} last />
      </div>
      <div className="flex h-[935px]">
        <WidgetBox />
        <div className="ml-[5px] h-[910px] w-[1142px] border border-[#828790] bg-[#a0a0a0]">
          <FormWindow />
        </div>
        <div className="ml-[5px] flex w-[512px] flex-col">
          <ObjectInspector />
          <div className="mt-px">
            <PropertyEditor />
          </div>
          <ResourceBrowser />
        </div>
      </div>
      <Taskbar />
    </div>
  );
}
